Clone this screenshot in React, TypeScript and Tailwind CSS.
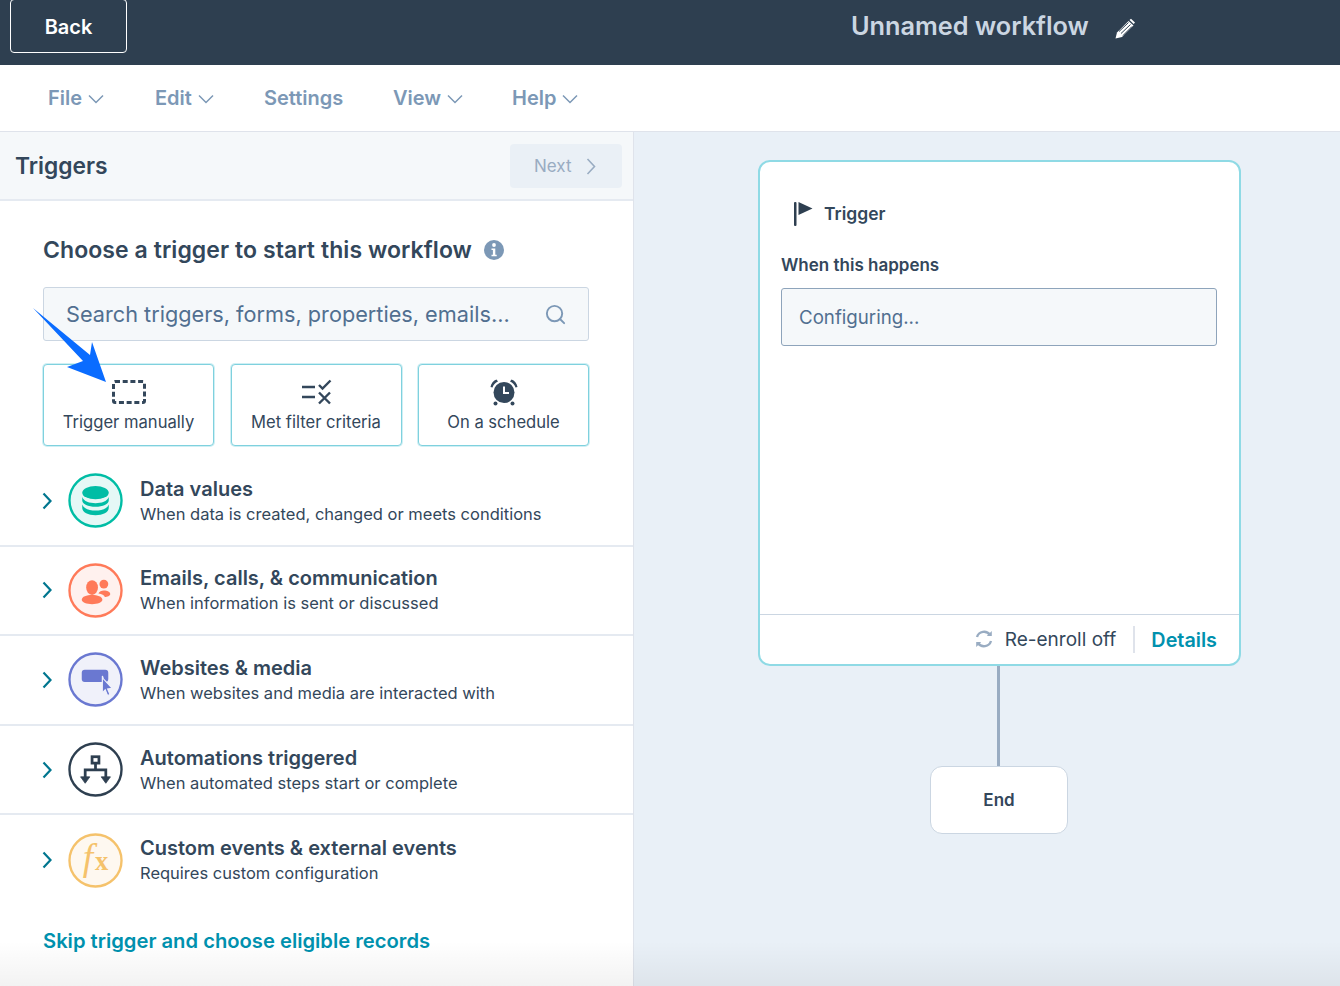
import React from "react";
import { Search } from "lucide-react";

const rows = [
  { t: "Data values", s: "When data is created, changed or meets conditions", c: "#00bda5", bg: "#e5f8f6", k: "data" },
  { t: "Emails, calls, & communication", s: "When information is sent or discussed", c: "#ff7a59", bg: "#fff1ee", k: "people" },
  { t: "Websites & media", s: "When websites and media are interacted with", c: "#6a78d1", bg: "#f0f1fa", k: "web" },
  { t: "Automations triggered", s: "When automated steps start or complete", c: "#2e3f50", bg: "#ffffff", k: "auto" },
  { t: "Custom events & external events", s: "Requires custom configuration", c: "#f5c26b", bg: "#fef8f0", k: "fx" },
];

function Caret() {
  return (
    <svg width="16" height="10" viewBox="0 0 16 10" className="ml-[6px] mt-[1px]" fill="none" stroke="#7c98b6" strokeWidth="1.500">
      <path d="M1 1.500l7 7 7-7" />
    </svg>
  );
}

function RowIcon({ k, c, bg }: { k: string; c: string; bg: string }) {
  return (
    <svg width="55" height="55" viewBox="0 0 56 56" className="shrink-0">
      <circle cx="28" cy="28" r="26.5" fill={bg} stroke={c} strokeWidth="2.4" />
      {k === "data" && (
        <g fill={c}>
          <ellipse cx="28" cy="20" rx="13.5" ry="6.800" />
          <path d="M14.500 24.500c1.500 4.500 7.500 6.300 13.500 6.300s12-1.800 13.500-6.300v3.500c0 3.500-6 6.400-13.500 6.400s-13.500-2.900-13.500-6.400z" />
          <path d="M14.500 32c1.500 4.500 7.500 6.300 13.500 6.300s12-1.800 13.500-6.300v3.500c0 4.500-6 7.500-13.500 7.500s-13.500-3-13.500-7.500z" />
        </g>
      )}
      {k === "people" && (
        <g fill={c}>
          <ellipse cx="24.500" cy="25" rx="6" ry="7.500" />
          <path d="M14 37.500c0-3.500 5-5 10.500-5s10.500 1.500 10.500 5c0 2.500-5 4.500-10.500 4.500S14 40 14 37.500z" />
          <circle cx="36.500" cy="21.500" r="4.500" />
          <path d="M31 31c.800-2 3-3 5.500-3 3.500 0 6.500 1.300 6.500 3.500 0 2-3 3-5.500 3-.500-1.800-3-3-6.500-3.500z" />
        </g>
      )}
      {k === "web" && (
        <g>
          <rect x="14" y="18" width="27" height="12.500" rx="3" fill={c} />
          <path d="M35 24.500l1 2.800 9 9.700-4.600.600 2.400 5.600-2.600 1.100-2.300-5.700-3 3.100z" fill={c} stroke={bg} strokeWidth="1.200" />
        </g>
      )}
      {k === "auto" && (
        <g fill="none" stroke={c} strokeWidth="2.800">
          <rect x="24.500" y="15" width="7" height="6.500" />
          <path d="M28 21.500v7M17.500 37v-8.500h21V37" />
          <path d="M12.800 35.500h9.400l-4.700 6.500zM33.800 35.500h9.400l-4.700 6.500z" fill={c} strokeWidth="0.800" />
        </g>
      )}
      {k === "fx" && (
        <text x="28" y="38" textAnchor="middle" fontFamily="'Liberation Serif', serif" fontSize="38" fontStyle="italic" fill={c}>
          f<tspan fontStyle="normal" fontSize="27" fontWeight="700" dx="2">x</tspan>
        </text>
      )}
    </svg>
  );
}

function TriggerCard({ label, children }: { label: string; children: React.ReactNode }) {
  return (
    <div className="w-[171px] h-[82px] rounded-[4px] border border-[#7fd1de] shadow-[0_0_0_1px_#cfeff4] bg-white flex flex-col items-center pt-[12px]">
      <div className="h-[30px] flex items-center justify-center">{children}</div>
      <div className="mt-[3px] text-[16.600px] leading-[24px] text-[#33475b] whitespace-nowrap">{label}</div>
    </div>
  );
}

export default function App() {
  return (
    <div className="relative w-[1340px] h-[986px] overflow-hidden bg-white text-[#33475b] flex flex-col font-['Inter','Liberation_Sans',sans-serif]">
      <header className="h-[65px] shrink-0 bg-[#2e3f50] flex items-start pl-[10px]">
        <button className="w-[117px] h-[54px] -mt-[1px] pt-[1px] border border-white rounded-[4px] text-white text-[20px] font-semibold">Back</button>
        <div className="ml-[724px] mt-[9px] h-[34px] flex items-center text-[25.300px] font-semibold text-[#cbd6e2] w-[237px] whitespace-nowrap">Unnamed workflow</div>
        <svg width="22" height="22" viewBox="0 0 22 22" className="ml-[26px] mt-[18px]">
          <path d="M1.500 20.500l1.500-6L14.500 3l5 4.500L8 19z" fill="#fff" />
          <path d="M15.500 2l1.500-1.300 4 3.800-1.300 1.500z" fill="#fff" />
          <path d="M5 13.500l9.500-9M7 15.500l9.500-9M9 17.500l9-9" stroke="#2e3f50" strokeWidth="1" />
        </svg>
      </header>

      <nav className="h-[67px] shrink-0 border-b border-[#dfe3eb] flex items-center pl-[48px] text-[20px] font-semibold text-[#7c98b6]">
        <span className="flex items-center w-[107px]">File<Caret /></span>
        <span className="flex items-center w-[109px]">Edit<Caret /></span>
        <span className="w-[129px]">Settings</span>
        <span className="flex items-center w-[119px]">View<Caret /></span>
        <span className="flex items-center">Help<Caret /></span>
      </nav>

      <main className="flex flex-1 min-h-0">
        <aside className="w-[634px] shrink-0 border-r border-[#dfe3eb] bg-white flex flex-col">
          <div className="h-[69px] shrink-0 bg-[#f5f8fa] border-b-2 border-[#e5eaf1] flex items-center justify-between pl-[15px] pr-[11px]">
            <h2 className="text-[22.800px] pt-[2px] font-semibold text-[#33475b]">Triggers</h2>
            <div className="w-[112px] h-[44px] rounded-[4px] bg-[#eaf0f6] flex items-center pl-[24px] gap-[14px] text-[17px] pt-[2px] text-[#99acc2]">
              Next
              <svg width="10" height="17" viewBox="0 0 10 17" fill="none" stroke="#99acc2" strokeWidth="1.600"><path d="M1.500 1l7 7.500-7 7.500" /></svg>
            </div>
          </div>

          <div className="px-[43px] pt-[35px]">
            <div className="flex items-center h-[28px]">
              <h1 className="text-[23px] tracking-[0.07px] font-semibold text-[#33475b] whitespace-nowrap">Choose a trigger to start this workflow</h1>
              <svg width="20" height="20" viewBox="0 0 20 20" className="ml-[12px] shrink-0">
                <circle cx="10" cy="10" r="10" fill="#7c98b6" />
                <circle cx="10" cy="5" r="1.900" fill="#fff" />
                <path d="M7.500 8.500h3.800v6.200h1.400v1.500H7.500v-1.500h1.400V10H7.500z" fill="#fff" />
              </svg>
            </div>
            <div className="mt-[23px] w-[546px] h-[54px] rounded-[3px] border border-[#cbd6e2] bg-[#f5f8fa] flex items-center justify-between pl-[22px] pr-[21px]">
              <span className="text-[21.700px] text-[#516f90] whitespace-nowrap">Search triggers, forms, properties, emails...</span>
              <Search size={23} strokeWidth={2} className="text-[#7c98b6] shrink-0" />
            </div>
            <div className="mt-[23px] flex gap-[16.500px]">
              <TriggerCard label="Trigger manually">
                <svg width="34" height="24" viewBox="0 0 34 24">
                  <rect x="1.500" y="1.500" width="31" height="21" rx="1.500" fill="none" stroke="#33475b" strokeWidth="3" strokeDasharray="5 2.700" />
                </svg>
              </TriggerCard>
              <TriggerCard label="Met filter criteria">
                <svg width="31" height="26" viewBox="0 0 31 26" fill="none" stroke="#33475b" strokeWidth="2.400">
                  <path d="M1 8h13M1 18h13M18 6l3.500 3.500L29.500 1.500M18 13.500l11 11M29 13.500l-11 11" />
                </svg>
              </TriggerCard>
              <TriggerCard label="On a schedule">
                <svg width="30" height="28" viewBox="0 0 30 28" fill="#33475b">
                  <circle cx="15" cy="14.500" r="10.500" />
                  <path d="M15 8.500v6.500h5" stroke="#fff" strokeWidth="2" fill="none" />
                  <path d="M1.500 9C2 5.500 4.500 2.500 7.500 1.500L9 3.500C6.500 4.500 4 7 3.500 9.500zM28.500 9C28 5.500 25.500 2.500 22.500 1.500L21 3.500C23.500 4.500 26 7 26.500 9.500z" />
                  <circle cx="6.500" cy="25.500" r="2" /><circle cx="23.500" cy="25.500" r="2" />
                </svg>
              </TriggerCard>
            </div>
          </div>

          <div className="mt-[11px]">
            {rows.map((r, i) => (
              <div key={r.t} className={`h-[89.600px] flex items-center pl-[42px] ${i < 4 ? "border-b-2 border-[#e5eaf1]" : ""}`}>
                <svg width="10" height="18" viewBox="0 0 10 18" fill="none" stroke="#00768f" strokeWidth="2.200" className="shrink-0">
                  <path d="M1.500 1.500L8.500 9l-7 7.500" />
                </svg>
                <div className="ml-[16px]"><RowIcon k={r.k} c={r.c} bg={r.bg} /></div>
                <div className="ml-[17px] pt-[1px]">
                  <div className="text-[20px] leading-[25px] font-semibold text-[#33475b]">{r.t}</div>
                  <div className="text-[16.500px] leading-[24px] text-[#33475b]">{r.s}</div>
                </div>
              </div>
            ))}
          </div>
          <div className="pl-[43px] mt-[23px] text-[20.200px] leading-[26px] font-semibold text-[#0091ae]">Skip trigger and choose eligible records</div>
        </aside>

        <section className="flex-1 bg-[#e9f0f7] pt-[28px] pl-[124px] flex flex-col items-start">
          <div className="w-[483px] h-[506px] rounded-[12px] border-2 border-[#8fdae5] bg-white flex flex-col">
            <div className="flex items-center pl-[33px] pt-[41px] h-[64px]">
              <svg width="20" height="26" viewBox="0 0 20 26" fill="#2e3f50" className="-mt-[2px]">
                <rect x="1" y="1" width="2.500" height="24" rx="1" />
                <path d="M5.500 1L19.500 7.500 5.500 14z" />
              </svg>
              <span className="ml-[11px] text-[17.500px] font-semibold text-[#33475b]">Trigger</span>
            </div>
            <div className="pl-[21px] pt-[27px] text-[17px] leading-[24px] font-semibold text-[#33475b]">When this happens</div>
            <div className="ml-[21px] mt-[11px] w-[436px] h-[58px] pt-[2px] rounded-[3px] border border-[#8ea4bb] bg-[#f5f8fa] flex items-center pl-[17px] text-[18.700px] text-[#516f90]">Configuring...</div>
            <div className="flex-1" />
            <div className="h-[50px] border-t border-[#cbd6e2] flex items-center justify-end pr-[22px]">
              <svg width="20" height="20" viewBox="0 0 20 20" fill="none" stroke="#99acc2" strokeWidth="2.400" className="-mt-[2px]">
                <path d="M3 8a7.300 7.300 0 0 1 13-2M17 12a7.300 7.300 0 0 1-13 2" />
                <path d="M17.800 2v5h-5M2.200 18v-5h5" strokeWidth="0" fill="#99acc2" />
              </svg>
              <span className="ml-[11px] pt-[2px] text-[19px] text-[#33475b]">Re-enroll off</span>
              <span className="ml-[17px] w-[2px] h-[27px] bg-[#dfe3eb]" />
              <span className="ml-[16px] pt-[2px] text-[19.800px] font-semibold text-[#0091ae]">Details</span>
            </div>
          </div>
          <div className="ml-[239px] w-[3px] h-[100px] bg-[#99acc2]" />
          <div className="ml-[172px] w-[138px] h-[68px] pt-[2px] rounded-[12px] border border-[#cbd6e2] bg-white flex items-center justify-center text-[17px] font-semibold text-[#33475b]">End</div>
        </section>
      </main>

      <svg width="80" height="90" viewBox="0 0 80 90" className="absolute left-[30px] top-[303px]">
        <path d="M3 5L60 52 62 39 76 79 37 64 53 58z" fill="#0a6cff" />
      </svg>

      <div className="absolute inset-x-0 bottom-0 h-[45px] bg-gradient-to-b from-transparent to-black/5 pointer-events-none" />
    </div>
  );
}
